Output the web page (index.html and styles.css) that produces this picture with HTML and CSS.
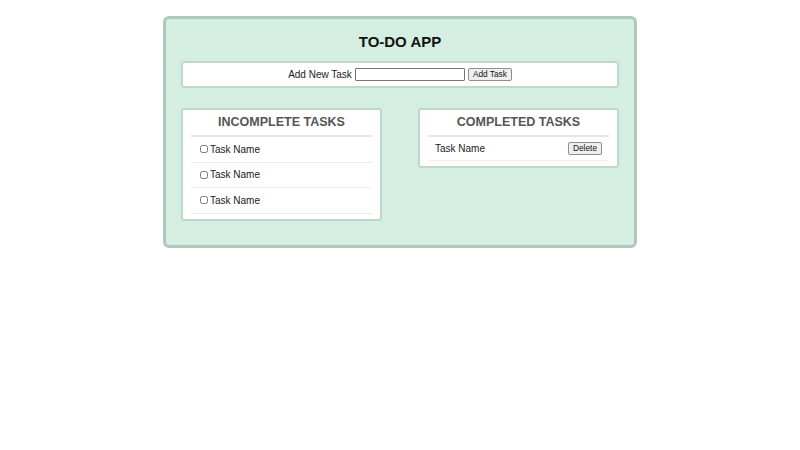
FILE: index.html
```html
<!DOCTYPE html>
<html lang="en">
<head>
<meta charset="utf-8">
<title>To-Do App</title>
<link rel="stylesheet" href="styles.css">
</head>
<body>
<div class="app">
  <h2 class="title">TO-DO APP</h2>
  <div class="add-bar">
    <label class="add-label" for="new-task">Add New Task</label>
    <input class="add-input" id="new-task" type="text">
    <button class="btn">Add Task</button>
  </div>
  <div class="columns">
    <div class="panel">
      <h3 class="panel-title">INCOMPLETE TASKS</h3>
      <ul class="list">
        <li class="row"><input class="check" type="checkbox"><span class="name">Task Name</span></li>
        <li class="row"><input class="check" type="checkbox"><span class="name">Task Name</span></li>
        <li class="row"><input class="check" type="checkbox"><span class="name">Task Name</span></li>
      </ul>
    </div>
    <div class="panel">
      <h3 class="panel-title">COMPLETED TASKS</h3>
      <ul class="list">
        <li class="row done"><span class="name">Task Name</span><button class="btn">Delete</button></li>
      </ul>
    </div>
  </div>
</div>
</body>
</html>
```
FILE: styles.css
```css
html, body {
  margin: 0;
  padding: 0;
  background: #ffffff;
}
body {
  font-family: "Liberation Sans", Arial, sans-serif;
  color: #111;
}
.app {
  box-sizing: border-box;
  width: 474px;
  margin: 16px auto 0;
  padding: 0 15px 24px;
  background: #d4eee1;
  border: 3px solid #adc9ba;
  border-radius: 6px;
}
.title {
  margin: 0;
  padding-top: 14px;
  font-size: 15px;
  line-height: 17px;
  font-weight: bold;
  text-align: center;
  color: #111;
}
.add-bar {
  box-sizing: border-box;
  height: 27px;
  margin-top: 11px;
  display: flex;
  align-items: center;
  justify-content: center;
  gap: 3px;
  background: #fff;
  border: 2px solid #c3d6cb;
  border-radius: 3px;
}
.add-label {
  font-size: 10px;
  color: #1a1a1a;
}
.add-input {
  box-sizing: border-box;
  width: 110px;
  height: 13px;
  margin: 0;
  padding: 0 2px;
  border: 1px solid #767676;
  border-radius: 1px;
  font-size: 8px;
}
.btn {
  box-sizing: border-box;
  height: 13px;
  margin: 0;
  padding: 0 4px;
  font-family: "Liberation Sans", Arial, sans-serif;
  font-size: 8.3px;
  line-height: 11px;
  color: #111;
  background: #efefef;
  border: 1px solid #8f8f8f;
  border-radius: 2px;
}
.columns {
  margin-top: 20px;
  display: grid;
  grid-template-columns: 1fr 1fr;
  column-gap: 36px;
  align-items: start;
}
.panel {
  box-sizing: border-box;
  background: #fff;
  border: 2px solid #c3d6cb;
  border-radius: 3px;
  padding: 0 8px 5px;
}
.panel-title {
  margin: 0;
  padding: 5px 0 5px;
  font-size: 12.5px;
  line-height: 15px;
  font-weight: bold;
  text-align: center;
  color: #555;
  border-bottom: 2px solid #e3e8e5;
}
.list {
  list-style: none;
  margin: 0;
  padding: 0;
}
.row {
  box-sizing: border-box;
  height: 25.5px;
  display: flex;
  align-items: center;
  padding-left: 7px;
  border-bottom: 1px solid #eceeed;
  font-size: 10px;
}
.row.done {
  height: 24px;
  justify-content: space-between;
  padding: 0 7px;
}
.check {
  width: 8px;
  height: 8px;
  margin: 0 2px 0 2px;
}
.name {
  font-size: 10px;
  color: #1a1a1a;
}
```
